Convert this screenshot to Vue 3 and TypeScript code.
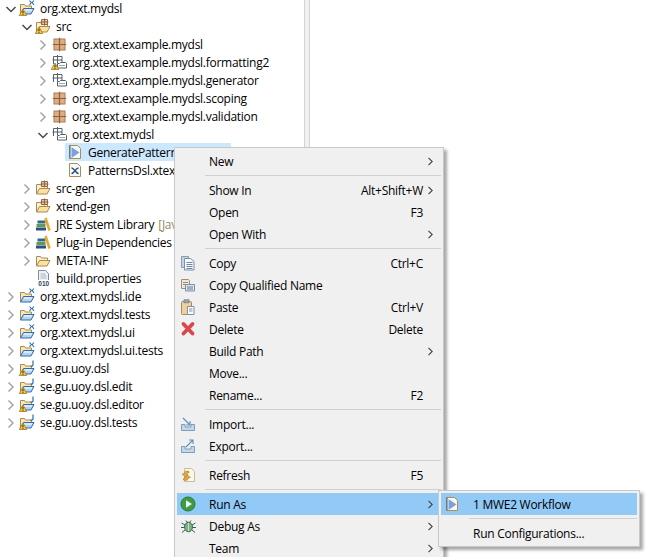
<template>
  <div class="workbench">
    <!-- Shared icon sprites -->
    <svg class="sprites" width="0" height="0">
      <defs>
        <symbol id="warn" viewBox="0 0 16 16">
          <path d="M4 9 7.800 15.500H.2Z" fill="#f5c542" stroke="#a07a20" stroke-width=".8" />
          <path d="M4 10.800v2.400M4 13.800v1" stroke="#3a2a00" stroke-width="1" />
        </symbol>
        <symbol id="pkg" viewBox="0 0 16 16">
          <rect x="3" y="3" width="11" height="11" fill="#dcae85" stroke="#a87a55" />
          <path d="M8.500 1.800v13.400M1.800 8.500h13.400" stroke="#8f5f3c" stroke-width="1.200" />
        </symbol>
        <symbol id="pkg-empty" viewBox="0 0 16 16">
          <path d="M2.500 10V2.500h8.500v6M6.500 1v8M1.500 6h9.500" fill="none" stroke="#55606c" />
          <path d="M6.500 9.500h2l1-1h5l1 1v4.500h-9Z" fill="#fff" stroke="#55606c" />
          <path d="M8 11.500h6" stroke="#9aa6b2" />
        </symbol>
        <symbol id="pkg-warn" viewBox="0 0 16 16">
          <use href="#pkg-empty" />
          <use href="#warn" />
        </symbol>
        <symbol id="folder" viewBox="0 0 16 16">
          <path d="M1.500 14V4.500h4l1 1.500h6v2.500" fill="#fdf1cf" stroke="#a98a4f" />
          <path d="M1.500 14l3-5.500h10.500l-3 5.500Z" fill="#fbe0a0" stroke="#a98a4f" />
        </symbol>
        <symbol id="src-folder" viewBox="0 0 16 16">
          <use href="#folder" />
          <path d="M6.500 1.500h6v5h-6ZM9.500 .5v7M5.500 4h8" fill="#e8c29d" stroke="#8f5f3c" stroke-width=".9" />
        </symbol>
        <symbol id="src-warn" viewBox="0 0 16 16">
          <use href="#src-folder" />
          <use href="#warn" />
        </symbol>
        <symbol id="blue-folder" viewBox="0 0 16 16">
          <path d="M1.500 14V4.500h4l1 1.500h6v2.500" fill="#f8e6b8" stroke="#a98a4f" />
          <path d="M1.500 14l3-5.500h10.500l-3 5.500Z" fill="#b7d3f0" stroke="#2f6bb0" />
          <path d="M5 10h8" stroke="#fff" />
        </symbol>
        <symbol id="proj-x" viewBox="0 0 16 16">
          <use href="#blue-folder" />
          <path d="M10.500 .5l1.800 2-1.800 2.500M15 .5l-1.800 2 1.800 2.500" fill="none" stroke="#2a6fb5" stroke-width="1.100" />
        </symbol>
        <symbol id="proj-x-warn" viewBox="0 0 16 16">
          <use href="#proj-x" />
          <use href="#warn" />
        </symbol>
        <symbol id="proj-j-warn" viewBox="0 0 16 16">
          <use href="#blue-folder" />
          <path d="M14 .5v4.500l-1 1.200h-1.500" fill="none" stroke="#2a6fb5" stroke-width="1.200" />
          <use href="#warn" />
        </symbol>
        <symbol id="library" viewBox="0 0 16 16">
          <rect x="2.500" y="4.500" width="8" height="3" fill="#2f6f86" />
          <rect x="1.500" y="8" width="9" height="3" fill="#5f9a5c" />
          <rect x="1" y="11.500" width="10" height="3" fill="#2f4f7f" />
          <path d="M10.500 2l4 12.500" stroke="#e8a92e" stroke-width="2.600" />
        </symbol>
        <symbol id="properties" viewBox="0 0 16 16">
          <path d="M3.500 .5h7l3 3v8h-10Z" fill="#eef2f6" stroke="#7f8c99" />
          <path d="M5.500 4h5M5.500 6h6M5.500 8h6" stroke="#a8b4c0" />
          <rect x="2" y="10" width="13" height="6" fill="#fff" />
          <text x="8.800" y="15.700" class="mini-text" text-anchor="middle">010</text>
        </symbol>
        <symbol id="mwe" viewBox="0 0 16 16">
          <path d="M2.500 1.500h8l3 3v10h-11Z" fill="#fbfaf2" stroke="#a88f55" />
          <path d="M3 1.500v13" stroke="#3d5f8f" stroke-width="1" />
          <path d="M4.500 3l8 5.500-8 5.500Z" fill="#7aa0e0" />
        </symbol>
        <symbol id="xtext" viewBox="0 0 16 16">
          <path d="M2.500 1.500h8l3 3v10h-11Z" fill="#fbfaf2" stroke="#a88f55" />
          <path d="M4.500 6c3 0 4 5.500 7 5.500M11.500 6c-3 0-4 5.500-7 5.500" fill="none" stroke="#23507f" stroke-width="1.300" />
        </symbol>
        <symbol id="copy" viewBox="0 0 16 16">
          <path d="M1.500 1.500h7v11h-7Z" fill="#c4d3e4" stroke="#8a9cb0" />
          <path d="M4.500 3.500h6l3.500 3v8.500h-9.500Z" fill="#f6f8fb" stroke="#7f8fa3" />
          <path d="M6.500 7.500h6M6.500 9.500h6M6.500 11.500h6M6.500 13.500h6" stroke="#6f87a6" />
        </symbol>
        <symbol id="copy-name" viewBox="0 0 16 16">
          <path d="M1.500 2.500h7l1 1v8h-8Z" fill="#f3e8cf" stroke="#a09070" />
          <path d="M3 5.500h5M3 7.500h4" stroke="#7f8fa3" />
          <path d="M5.500 7.500h9v6.500h-9Z" fill="#dce6f2" stroke="#7f8fa3" />
          <path d="M7 10h6M7 12h6" stroke="#5f7a9c" />
        </symbol>
        <symbol id="paste" viewBox="0 0 16 16">
          <rect x="1.500" y="2.500" width="10" height="13" rx="1" fill="#ecd0a0" stroke="#a98a5f" />
          <rect x="4" y=".8" width="5" height="3" fill="#9aa5b1" stroke="#6f7b87" stroke-width=".7" />
          <path d="M7.500 7.500h6.500v8h-6.500Z" fill="#fff" stroke="#7f8fa3" />
          <path d="M9 10h3.500M9 12h3.500" stroke="#7f8fa3" />
        </symbol>
        <symbol id="delete" viewBox="0 0 16 16">
          <path d="M3.500 3 12.500 12.500M12.500 3 3.500 12.500" stroke="#d9474c" stroke-width="3.800" stroke-linecap="round" />
        </symbol>
        <symbol id="import" viewBox="0 0 16 16">
          <path d="M1.500 8.500h3.500v2.500h6v-2.500h3.500v6h-13Z" fill="#c5d8ea" stroke="#7d9dbc" />
          <path d="M3 2l6.500 6.500M10 5v4H6" fill="none" stroke="#5c8fc0" stroke-width="1.100" />
        </symbol>
        <symbol id="export" viewBox="0 0 16 16">
          <path d="M1.500 8.500h3.500v2.500h6v-2.500h3.500v6h-13Z" fill="#c5d8ea" stroke="#7d9dbc" />
          <path d="M6 9l7-7M9 2h4v4" fill="none" stroke="#5c8fc0" stroke-width="1.100" />
        </symbol>
        <symbol id="refresh" viewBox="0 0 16 16">
          <path d="M4.500 1.500h7l3 3v10h-10Z" fill="#fbf8ea" stroke="#c9bd94" />
          <path d="M9 4.500c-3-1-5 0-5 2.500h-2l3 2.500L8 7H6c0-1 1-1.500 3-1ZM3.500 13c3 1 5 0 5-2.500h2l-3-2.500-3 2.500h2c0 1-1 1.500-3 1Z" fill="#e8ad3a" stroke="#a97a1c" stroke-width=".6" />
        </symbol>
        <symbol id="run" viewBox="0 0 16 16">
          <circle cx="8" cy="8" r="7" fill="#3f9c46" stroke="#2b7a33" />
          <path d="M6 4.200 12 8l-6 3.800Z" fill="#f2fbf0" />
        </symbol>
        <symbol id="debug" viewBox="0 0 16 16">
          <ellipse cx="8.500" cy="9" rx="4" ry="4.800" fill="#7fae7f" stroke="#3f6f5f" />
          <path d="M1.500 5l3.500 2M15.500 5 12 7M1 9.500h3.500M16 9.500h-3.500M2 14.500l3-2.500M15 14.500l-3-2.500M6 2.500l1.500 2M11 2.500l-1.500 2" stroke="#2f5f5f" />
          <path d="M8.500 5v8" stroke="#c9e0b0" />
        </symbol>
      </defs>
    </svg>

    <!-- Package explorer tree -->
    <aside class="explorer">
      <div v-for="row in treeRows" :key="row.label + row.depth" :class="['tree-row', `depth-${row.depth}`]">
        <span class="twistie">
          <svg v-if="row.state === 'open'" width="16" height="16" viewBox="0 0 16 16">
            <path d="M3.500 7 8 11.500 12.500 7" fill="none" stroke="#4a4a4a" stroke-width="1.500" />
          </svg>
          <svg v-else-if="row.state === 'closed'" width="16" height="16" viewBox="0 0 16 16">
            <path d="M5.500 4.500 10 9 5.500 13.500" fill="none" stroke="#a6a6a6" stroke-width="1.500" />
          </svg>
        </span>
        <span :class="['row-body', { selected: row.selected }]">
          <svg class="icon" width="16" height="16"><use :href="`#${row.icon}`" /></svg>
          <span class="row-label">{{ row.label }}</span>
          <span v-if="row.note" class="row-note">{{ row.note }}</span>
        </span>
      </div>
    </aside>
    <div class="sash" />
    <div class="editor" />

    <!-- Context menu -->
    <div class="menu main-menu">
      <template v-for="(item, i) in mainMenu" :key="i">
        <div v-if="item.separator" class="menu-sep" />
        <div v-else :class="['menu-item', { active: item.active }]">
          <span class="menu-icon">
            <svg v-if="item.icon" width="16" height="16"><use :href="`#${item.icon}`" /></svg>
          </span>
          <span class="menu-label">{{ item.label }}</span>
          <span class="menu-key">{{ item.shortcut }}</span>
          <span class="menu-arrow">
            <svg v-if="item.submenu" width="7" height="9" viewBox="0 0 7 9">
              <path d="M1.500 .8 5.200 4.500 1.500 8.200" fill="none" stroke="#444" stroke-width="1.100" />
            </svg>
          </span>
        </div>
      </template>
    </div>

    <!-- Run As submenu -->
    <div class="menu sub-menu">
      <div class="menu-item active">
        <span class="menu-icon">
          <svg width="16" height="16"><use href="#mwe" /></svg>
        </span>
        <span class="menu-label">1 MWE2 Workflow</span>
      </div>
      <div class="menu-sep" />
      <div class="menu-item">
        <span class="menu-icon" />
        <span class="menu-label">Run Configurations...</span>
      </div>
    </div>
  </div>
</template>

<script setup lang="ts">
interface TreeRow {
  label: string
  depth: number
  icon: string
  state?: 'open' | 'closed'
  note?: string
  selected?: boolean
}

interface MenuEntry {
  label?: string
  icon?: string
  shortcut?: string
  submenu?: boolean
  active?: boolean
  separator?: boolean
}

const treeRows: TreeRow[] = [
  { label: 'org.xtext.mydsl', depth: 0, icon: 'proj-x-warn', state: 'open' },
  { label: 'src', depth: 1, icon: 'src-warn', state: 'open' },
  { label: 'org.xtext.example.mydsl', depth: 2, icon: 'pkg', state: 'closed' },
  { label: 'org.xtext.example.mydsl.formatting2', depth: 2, icon: 'pkg-warn', state: 'closed' },
  { label: 'org.xtext.example.mydsl.generator', depth: 2, icon: 'pkg-empty', state: 'closed' },
  { label: 'org.xtext.example.mydsl.scoping', depth: 2, icon: 'pkg', state: 'closed' },
  { label: 'org.xtext.example.mydsl.validation', depth: 2, icon: 'pkg', state: 'closed' },
  { label: 'org.xtext.mydsl', depth: 2, icon: 'pkg-empty', state: 'open' },
  { label: 'GeneratePatterns', depth: 3, icon: 'mwe', selected: true },
  { label: 'PatternsDsl.xtext', depth: 3, icon: 'xtext' },
  { label: 'src-gen', depth: 1, icon: 'src-folder', state: 'closed' },
  { label: 'xtend-gen', depth: 1, icon: 'src-folder', state: 'closed' },
  { label: 'JRE System Library', depth: 1, icon: 'library', state: 'closed', note: '[Jav' },
  { label: 'Plug-in Dependencies', depth: 1, icon: 'library', state: 'closed' },
  { label: 'META-INF', depth: 1, icon: 'folder', state: 'closed' },
  { label: 'build.properties', depth: 1, icon: 'properties' },
  { label: 'org.xtext.mydsl.ide', depth: 0, icon: 'proj-x', state: 'closed' },
  { label: 'org.xtext.mydsl.tests', depth: 0, icon: 'proj-x', state: 'closed' },
  { label: 'org.xtext.mydsl.ui', depth: 0, icon: 'proj-x', state: 'closed' },
  { label: 'org.xtext.mydsl.ui.tests', depth: 0, icon: 'proj-x', state: 'closed' },
  { label: 'se.gu.uoy.dsl', depth: 0, icon: 'proj-j-warn', state: 'closed' },
  { label: 'se.gu.uoy.dsl.edit', depth: 0, icon: 'proj-j-warn', state: 'closed' },
  { label: 'se.gu.uoy.dsl.editor', depth: 0, icon: 'proj-j-warn', state: 'closed' },
  { label: 'se.gu.uoy.dsl.tests', depth: 0, icon: 'proj-j-warn', state: 'closed' },
]

const mainMenu: MenuEntry[] = [
  { label: 'New', submenu: true },
  { separator: true },
  { label: 'Show In', shortcut: 'Alt+Shift+W', submenu: true },
  { label: 'Open', shortcut: 'F3' },
  { label: 'Open With', submenu: true },
  { separator: true },
  { label: 'Copy', icon: 'copy', shortcut: 'Ctrl+C' },
  { label: 'Copy Qualified Name', icon: 'copy-name' },
  { label: 'Paste', icon: 'paste', shortcut: 'Ctrl+V' },
  { label: 'Delete', icon: 'delete', shortcut: 'Delete' },
  { label: 'Build Path', submenu: true },
  { label: 'Move...' },
  { label: 'Rename...', shortcut: 'F2' },
  { separator: true },
  { label: 'Import...', icon: 'import' },
  { label: 'Export...', icon: 'export' },
  { separator: true },
  { label: 'Refresh', icon: 'refresh', shortcut: 'F5' },
  { separator: true },
  { label: 'Run As', icon: 'run', submenu: true, active: true },
  { label: 'Debug As', icon: 'debug', submenu: true },
  { label: 'Team', submenu: true },
]
</script>

<style>
html,
body {
  margin: 0;
  background: #fff;
}
</style>

<style scoped>
.workbench {
  position: relative;
  display: flex;
  width: 648px;
  height: 557px;
  overflow: hidden;
  background: #fff;
  font-family: "Open Sans", "Noto Sans", sans-serif;
  font-size: 12px;
  letter-spacing: -0.27px;
  color: #000;
}

.sprites {
  position: absolute;
}

.mini-text {
  font-family: "Liberation Sans", sans-serif;
  font-size: 6.500px;
  font-weight: 700;
  fill: #1f3f66;
  letter-spacing: 0;
}

/* ────────────── Tree ────────────── */

.explorer {
  width: 304px;
  flex-shrink: 0;
  margin-top: -1px;
}

.sash {
  width: 6px;
  flex-shrink: 0;
  box-sizing: border-box;
  background: #f0f0f0;
  border-left: 1px solid #d4d4d4;
  border-right: 1px solid #d4d4d4;
}

.editor {
  flex: 1;
}

.tree-row {
  display: flex;
  align-items: center;
  height: 18px;
  white-space: nowrap;
}

.depth-0 { padding-left: 3px; }
.depth-1 { padding-left: 19px; }
.depth-2 { padding-left: 35px; }
.depth-3 { padding-left: 51px; }

.twistie {
  display: flex;
  width: 16px;
  height: 16px;
  flex-shrink: 0;
}

.row-body {
  display: flex;
  align-items: center;
  height: 18px;
}

.row-body.selected {
  margin-left: -2px;
  padding: 0 2px;
  width: 162px;
  background: #cce8ff;
}

.icon {
  flex-shrink: 0;
  margin-right: 5px;
}

.row-note {
  margin-left: 4px;
  color: #9a8a5a;
}

/* ────────────── Menus ────────────── */

.menu {
  position: absolute;
  box-sizing: border-box;
  background: #f0f0f0;
  border: 1px solid #c8c8c8;
  box-shadow: 3px 3px 3px rgba(0, 0, 0, 0.35);
}

.main-menu {
  left: 174px;
  top: 147px;
  width: 270px;
  height: 430px;
  padding: 2px;
}

.sub-menu {
  left: 438px;
  top: 490px;
  width: 202px;
  padding: 2px;
}

.menu-item {
  display: flex;
  align-items: center;
  height: 22px;
  padding-right: 6px;
  white-space: nowrap;
}

.menu-item.active {
  background: #91c9f7;
}

.menu-icon {
  display: flex;
  box-sizing: border-box;
  width: 32px;
  padding-left: 3px;
  flex-shrink: 0;
}

.menu-label {
  flex: 1;
}

.menu-key {
  margin-right: 2px;
}

.menu-arrow {
  display: flex;
  justify-content: center;
  width: 10px;
  flex-shrink: 0;
}

.menu-sep {
  height: 1px;
  margin: 3px 0 3px 28px;
  background: #d0d0d0;
}
</style>
